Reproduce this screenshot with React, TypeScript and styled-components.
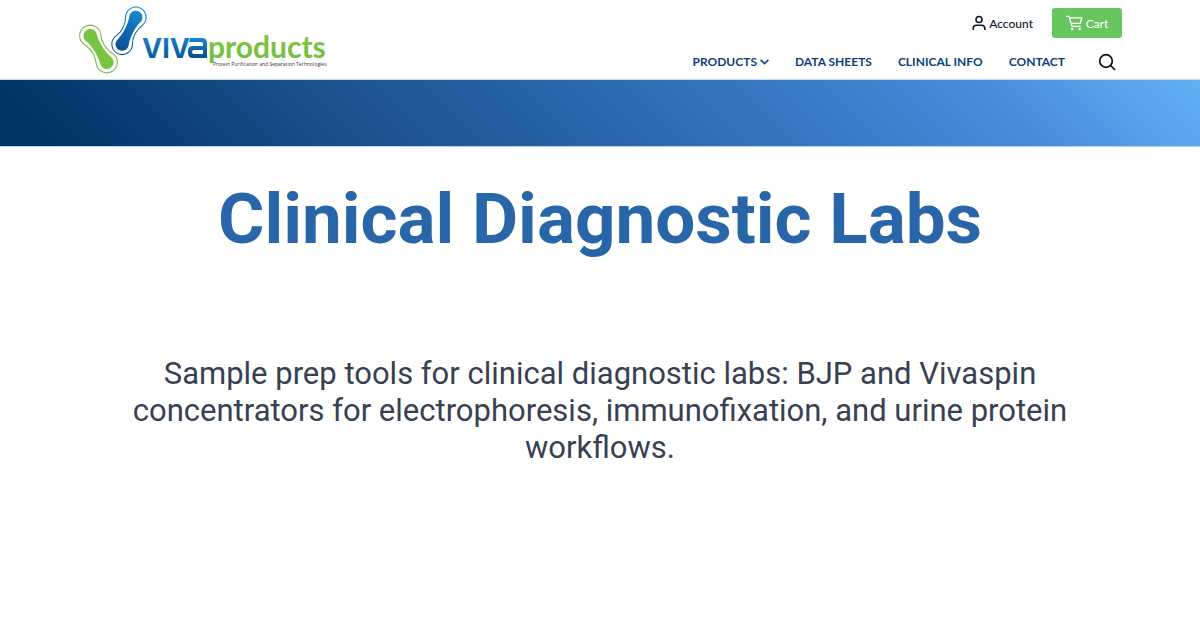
import React from "react";
import styled, { createGlobalStyle } from "styled-components";

const GlobalStyle = createGlobalStyle`
  *, *::before, *::after { box-sizing: border-box; }
  body {
    margin: 0;
    background: #fff;
    font-family: Roboto, "Liberation Sans", sans-serif;
  }
`;

const Header = styled.header`
  display: flex;
  justify-content: space-between;
  height: 80px;
  padding: 0 78px;
  border-bottom: 1px solid #c9dcec;
  font-family: Lato, "Liberation Sans", sans-serif;
`;

const LogoLink = styled.a`
  display: block;
  padding-top: 5px;
  svg { display: block; }
`;

const Tools = styled.div`
  display: flex;
  flex-direction: column;
  align-items: flex-end;
`;

const AccountRow = styled.div`
  display: flex;
  align-items: center;
  gap: 19px;
  padding-top: 8px;
`;

const AccountLink = styled.a`
  display: flex;
  align-items: center;
  gap: 3px;
  color: #111827;
  font-size: 12px;
  font-weight: 500;
  text-decoration: none;
`;

const CartButton = styled.button`
  display: flex;
  align-items: center;
  justify-content: center;
  gap: 3px;
  width: 70px;
  height: 30px;
  padding: 0;
  border: 0;
  border-radius: 3px;
  background: #68c660;
  color: #fff;
  font: 500 12px Lato, "Liberation Sans", sans-serif;
`;

const Nav = styled.nav`
  display: flex;
  align-items: center;
  gap: 26px;
  padding: 12px 6px 0 0;
`;

const NavLink = styled.a`
  display: flex;
  align-items: center;
  gap: 3px;
  color: #0b3f7d;
  font-size: 12px;
  font-weight: 700;
  line-height: 24px;
  text-decoration: none;
`;

const SearchButton = styled.button`
  display: flex;
  margin-left: 7px;
  padding: 0;
  border: 0;
  background: none;
  color: #111;
`;

const Banner = styled.div`
  height: 67px;
  border-bottom: 1px solid #b9d3ec;
  background: linear-gradient(45deg, #003366 4%, #1a4f8a 28%, #2b6cb0 53%, #468ada 81%, #63b0f5 100%);
`;

const Main = styled.main`
  display: flex;
  flex-direction: column;
  align-items: center;
  padding: 30px 80px 0;
  text-align: center;
`;

const Title = styled.h1`
  margin: 0;
  color: #2966a9;
  font-size: 71px;
  font-weight: 700;
  line-height: 84px;
`;

const Summary = styled.p`
  max-width: 960px;
  margin: 94px 0 0;
  color: #374151;
  font-size: 31px;
  line-height: 37px;
`;

const cellBody =
  "M-6.3 -13 A6.8 6.8 0 1 1 6.3 -13 C4 -7 4 7 6.3 13 A6.8 6.8 0 1 1 -6.3 13 C-4 7 -4 -7 -6.3 -13 Z";
const cellRing =
  "M-9.8 -11.5 A10.6 10.6 0 1 1 9.8 -11.5 C6 -5 6 5 9.8 11.5 A10.6 10.6 0 1 1 -9.8 11.5 C-6 5 -6 -5 -9.8 -11.5 Z";

function Logo() {
  return (
    <svg width="250" height="72" viewBox="0 0 250 72" role="img" aria-label="Viva Products">
      <defs>
        <linearGradient id="blue" x1="0" y1="0" x2="0" y2="1">
          <stop offset="0" stopColor="#1689d3" />
          <stop offset="1" stopColor="#084d94" />
        </linearGradient>
        <linearGradient id="green" x1="0" y1="0" x2="0" y2="1">
          <stop offset="0" stopColor="#8bc53f" />
          <stop offset="1" stopColor="#6abf3e" />
        </linearGradient>
      </defs>
      <g transform="translate(20.5 44) rotate(-32)">
        <path d={cellRing} fill="none" stroke="#7ac143" strokeWidth="1.1" />
        <path d={cellBody} fill="#79c342" />
      </g>
      <g transform="translate(51 25.8) rotate(27) scale(0.97)">
        <path d={cellRing} fill="none" stroke="url(#blue)" strokeWidth="1.1" />
        <path d={cellBody} fill="url(#blue)" />
      </g>
      <text x="64" y="53" fill="url(#blue)" fontFamily="Inter, sans-serif" fontWeight="700" fontSize="27">VIV</text>
      <path
        d="M112 33 H124 Q129 33 129 38 V53 H115 Q110 53 110 48 V46 Q110 41 115 41 H125 V39 Q125 37 123 37 H111 Z M116 45 Q114 45 114 47 Q114 49 116 49 H125 V45 Z"
        fill="url(#blue)" fillRule="evenodd"
      />
      <text x="130" y="53" fill="url(#green)" fontFamily="Lato, sans-serif" fontWeight="700" fontSize="30">products</text>
      <text x="135" y="61" fill="#333" fontFamily="Open Sans, sans-serif" fontSize="5">Protein Purification and Separation Technologies</text>
    </svg>
  );
}

export default function App() {
  return (
    <>
      <GlobalStyle />
      <Header>
        <LogoLink href="#" aria-label="Viva Products home"><Logo /></LogoLink>
        <Tools>
          <AccountRow>
            <AccountLink href="#">
              <svg width="14" height="16" viewBox="0 0 14 16" fill="none" stroke="currentColor" strokeWidth="1.6">
                <circle cx="7" cy="4.5" r="3" />
                <path d="M1.2 15 V13.5 Q1.2 10.2 4.5 10.2 H9.5 Q12.8 10.2 12.8 13.5 V15" />
              </svg>
              Account
            </AccountLink>
            <CartButton type="button">
              <svg width="17" height="16" viewBox="0 0 17 16" fill="none" stroke="currentColor" strokeWidth="1.3">
                <path d="M0 1.4 H3 L6 11.4 H14.6 M3.4 2.8 H15.8 L14.2 8.3 H5" />
                <circle cx="6.3" cy="14" r="1.3" fill="currentColor" stroke="none" />
                <circle cx="13.6" cy="14" r="1.3" fill="currentColor" stroke="none" />
              </svg>
              Cart
            </CartButton>
          </AccountRow>
          <Nav>
            <NavLink href="#">
              PRODUCTS
              <svg width="9" height="6" viewBox="0 0 9 6" fill="none" stroke="currentColor" strokeWidth="1.6">
                <path d="M0.6 0.8 L4.5 4.6 L8.4 0.8" />
              </svg>
            </NavLink>
            <NavLink href="#">DATA SHEETS</NavLink>
            <NavLink href="#">CLINICAL INFO</NavLink>
            <NavLink href="#">CONTACT</NavLink>
            <SearchButton type="button" aria-label="Search">
              <svg width="18" height="18" viewBox="0 0 18 18" fill="none" stroke="currentColor" strokeWidth="1.7">
                <circle cx="8" cy="8" r="6.3" />
                <path d="M12.5 12.5 L17 17" />
              </svg>
            </SearchButton>
          </Nav>
        </Tools>
      </Header>
      <Banner />
      <Main>
        <Title>Clinical Diagnostic Labs</Title>
        <Summary>
          Sample prep tools for clinical diagnostic labs: BJP and Vivaspin concentrators for
          electrophoresis, immunofixation, and urine protein workflows.
        </Summary>
      </Main>
    </>
  );
}
